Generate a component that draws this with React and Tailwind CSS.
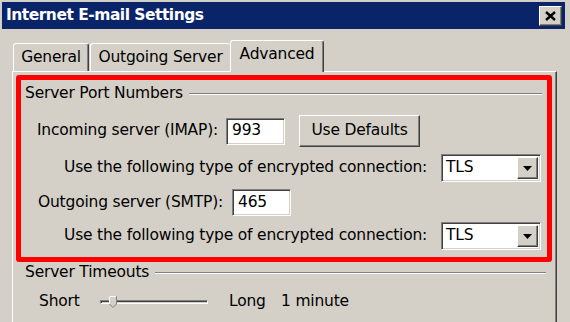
import React from "react";

const raised =
  "border border-t-white border-l-white border-b-[#404040] border-r-[#404040] shadow-[inset_-1px_-1px_0_#808080]";
const sunken =
  "border border-t-[#808080] border-l-[#808080] border-b-white border-r-white shadow-[inset_1px_1px_0_#404040,inset_-1px_-1px_0_#d4d0c8]";

function Etched({ label, className = "" }) {
  return (
    <div className={"flex items-center h-[18px] pl-[4px] pr-[5px] " + className}>
      <span className="whitespace-nowrap">{label}</span>
      <div className="flex-1 ml-[6px] h-0 border-t border-b border-t-[#808080] border-b-white" />
    </div>
  );
}

function Select() {
  return (
    <div className={"w-[100px] h-[28px] bg-white flex items-stretch p-[2px] " + sunken}>
      <div className="flex-1 flex items-center pl-[2px]">TLS</div>
      <div className={"w-[21px] bg-[#d4d0c8] flex items-center justify-center " + raised}>
        <svg width="9" height="5" viewBox="0 0 9 5">
          <polygon points="0,0 9,0 4.5,5" fill="#000" />
        </svg>
      </div>
    </div>
  );
}

function Input({ value }) {
  return (
    <div className={"w-[59px] h-[27px] bg-white flex items-center pl-[5px] " + sunken}>{value}</div>
  );
}

export default function App() {
  return (
    <div className="w-[570px] h-[322px] overflow-hidden bg-[#d4d0c8] text-black font-['DejaVu_Sans',Verdana,sans-serif] text-[15.5px] tracking-[-0.2px] leading-none">
      {/* title bar */}
      <div className="ml-[2px] mr-[5px] pt-[2px]">
        <div className="h-[27px] bg-[#0a246a] flex items-center justify-between pl-[4px] pr-[3px]">
          <span className="text-white font-bold text-[15.5px] tracking-[-0.5px]">Internet E-mail Settings</span>
          <div className={"w-[23px] h-[20px] bg-[#d4d0c8] flex items-center justify-center " + raised}>
            <svg width="11" height="10" viewBox="0 0 11 10">
              <path d="M1 1 L10 9 M10 1 L1 9" stroke="#000" strokeWidth="2.4" />
            </svg>
          </div>
        </div>
      </div>

      {/* tabs */}
      <div className="mt-[11px] pl-[13px] flex items-end h-[31px]">
        <div className="w-[76px] h-[28px] flex items-center justify-center rounded-t-[3px] border-t border-l border-r border-t-white border-l-white border-r-[#404040] shadow-[inset_-1px_0_0_#808080]">
          General
        </div>
        <div className="ml-[1px] w-[140px] h-[28px] flex items-center justify-center rounded-t-[3px] border-t border-l border-t-white border-l-white">
          Outgoing Server
        </div>
        <div className="relative z-10 -mb-[1px] w-[94px] h-[32px] bg-[#d4d0c8] flex justify-center pt-[6px] rounded-t-[3px] border-t border-l border-r border-t-white border-l-white border-r-[#404040] shadow-[inset_-1px_0_0_#808080]">
          <span>Advanced</span>
        </div>
      </div>

      {/* panel */}
      <div className="ml-[12px] w-[545px] h-[260px] border-t border-l border-r border-t-white border-l-white border-r-[#404040] shadow-[inset_-1px_0_0_#808080] pt-[3px] pl-[3px]">
        <div className="w-[536px] h-[187px] border-[5px] border-[#ff0000] rounded-[3px] pt-[5px]">
          <Etched label="Server Port Numbers" />
          {/* row 1 */}
          <div className="mt-[12px] h-[32px] flex items-center pl-[16px]">
            <div className="w-[189px] whitespace-nowrap">Incoming server (IMAP):</div>
            <Input value="993" />
            <div className={"ml-[14px] w-[121px] h-[32px] flex items-center justify-center " + raised}>
              Use Defaults
            </div>
          </div>
          {/* row 2 */}
          <div className="mt-[7px] h-[28px] flex items-center pl-[43px]">
            <div className="w-[377px] whitespace-nowrap">Use the following type of encrypted connection:</div>
            <Select />
          </div>
          {/* row 3 */}
          <div className="mt-[7px] h-[27px] flex items-center pl-[17px]">
            <div className="w-[194px] whitespace-nowrap">Outgoing server (SMTP):</div>
            <Input value="465" />
          </div>
          {/* row 4 */}
          <div className="mt-[6px] h-[28px] flex items-center pl-[43px]">
            <div className="w-[377px] whitespace-nowrap">Use the following type of encrypted connection:</div>
            <Select />
          </div>
        </div>

        <Etched label="Server Timeouts" className="mt-[2px] ml-[5px] w-[530px]" />
        {/* slider row */}
        <div className="mt-[11px] h-[18px] flex items-center pl-[23px]">
          <div className="w-[61px]">Short</div>
          <div className="relative w-[108px] h-[18px] flex items-center">
            <div className="w-full h-[4px] border-t border-l border-t-[#808080] border-l-[#808080] border-b border-r border-b-white border-r-white shadow-[inset_1px_1px_0_#404040]" />
            <svg className="absolute left-[9px] top-[3px]" width="8" height="12" viewBox="0 0 8 12">
              <path d="M0.5 0.5 H7.5 V8 L4 11.5 L0.5 8 Z" fill="#d4d0c8" stroke="#808080" />
              <path d="M0.5 8 V0.5 H7" fill="none" stroke="#fff" />
            </svg>
          </div>
          <div className="ml-[21px] w-[52px]">Long</div>
          <div>1 minute</div>
        </div>
      </div>
    </div>
  );
}
